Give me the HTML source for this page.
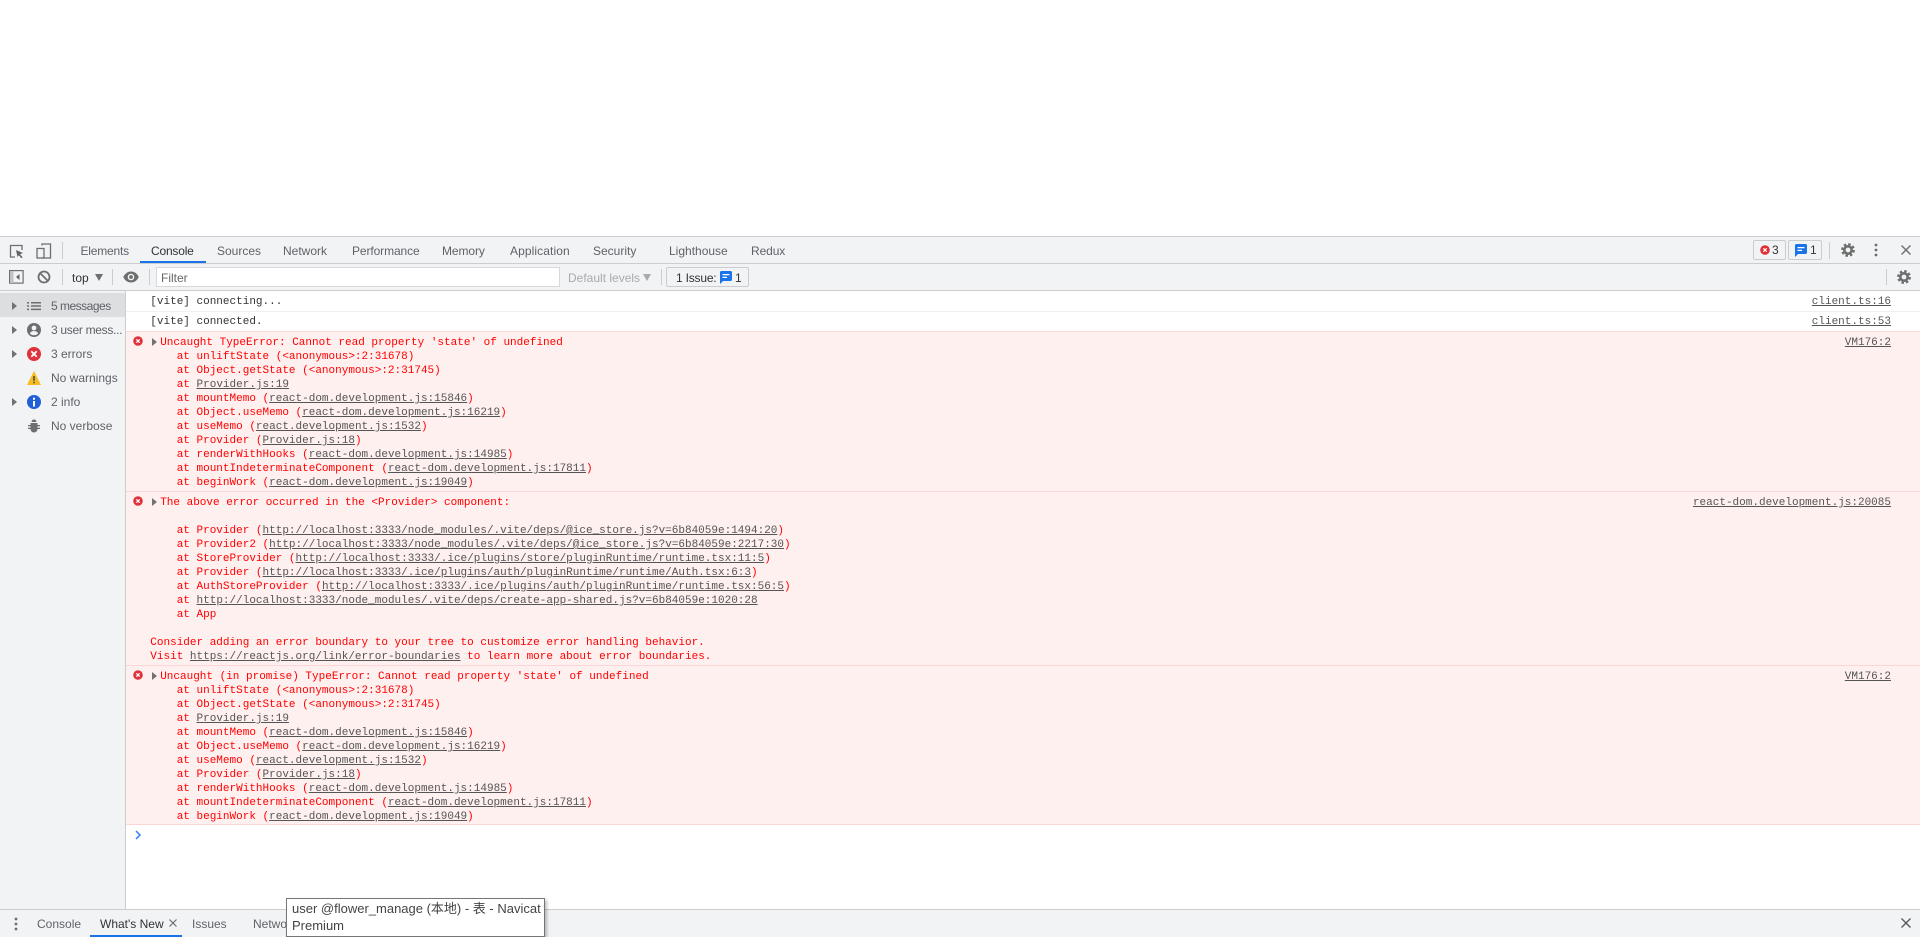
<!DOCTYPE html>
<html><head><meta charset="utf-8"><title>DevTools</title>
<style>
html,body{margin:0;padding:0;width:1920px;height:937px;overflow:hidden;background:#fff}
body{position:relative;font:12px "Liberation Sans","Noto Sans CJK SC",sans-serif;color:#5f6368}
.a{position:absolute;white-space:pre}
.bar{position:absolute;left:0;width:1920px;background:#f1f3f4;box-sizing:border-box}
.t{position:absolute;line-height:14px;white-space:pre}
.sep{position:absolute;width:1px;background:#ccc}
.m{position:absolute;font:11px/14px "Liberation Mono",monospace;white-space:pre;color:#f00}
.m a{color:#555;text-decoration:underline}
.m i{display:inline-block;width:9.9px}
.k{color:#333}
.er{position:absolute;left:126px;width:1794px;background:#fff0f0;border-top:1px solid #ffd6d6;box-sizing:border-box}
.src{position:absolute;right:29px;font:11px/14px "Liberation Mono",monospace;color:#555;text-decoration:underline;white-space:pre}
svg{position:absolute;overflow:visible}
.tri{position:absolute;width:0;height:0;border-left:5px solid #727272;border-top:4px solid transparent;border-bottom:4px solid transparent}
.badge{position:absolute;box-sizing:border-box;border:1px solid #c9ccd0;border-radius:2px;height:20px;color:#333}
</style></head><body>

<!-- Top tab bar -->
<div class="bar" style="top:236px;height:28px;border-top:1px solid #cbcdd1;border-bottom:1px solid #cbcdd1"></div>
<svg style="left:9px;top:244px" width="16" height="16" viewBox="0 0 16 16"><path d="M13 6V1.500H1.500V13H6" fill="none" stroke="#6e6e6e" stroke-width="1.300"/><path d="M7 6l7 3-3 1.200 2.600 3-1.200 1-2.600-3L8.500 13z" fill="#5f6368"/></svg>
<svg style="left:36px;top:243px" width="16" height="16" viewBox="0 0 16 16"><path d="M6 2.500V1h8.500v14H6" fill="none" stroke="#6e6e6e" stroke-width="1.300"/><rect x="1" y="5.500" width="7" height="9.500" fill="none" stroke="#6e6e6e" stroke-width="1.300"/></svg>
<div class="sep" style="left:62px;top:242px;height:17px"></div>
<div class="t" style="left:80.500px;top:244px;letter-spacing:-.2px">Elements</div>
<div class="t" style="left:151px;top:244px;color:#333;letter-spacing:-.2px">Console</div>
<div class="a" style="left:140px;top:261px;width:66px;height:2px;background:#1a73e8"></div>
<div class="t" style="left:217px;top:244px">Sources</div>
<div class="t" style="left:283px;top:244px">Network</div>
<div class="t" style="left:352px;top:244px;letter-spacing:-.1px">Performance</div>
<div class="t" style="left:442px;top:244px;letter-spacing:-.1px">Memory</div>
<div class="t" style="left:510px;top:244px;letter-spacing:.1px">Application</div>
<div class="t" style="left:593px;top:244px">Security</div>
<div class="t" style="left:669px;top:244px">Lighthouse</div>
<div class="t" style="left:751px;top:244px;letter-spacing:-.1px">Redux</div>

<div class="badge" style="left:1753px;top:240px;width:33px"></div>
<svg style="left:1760px;top:245px" width="10" height="10" viewBox="0 0 10 10"><circle cx="5" cy="5" r="4.800" fill="#e02f36"/><path d="M3.300 3.300l3.400 3.400M6.700 3.300L3.300 6.700" stroke="#fff" stroke-width="1.200"/></svg>
<div class="t" style="left:1772px;top:243px;color:#333">3</div>
<div class="badge" style="left:1788px;top:240px;width:34px"></div>
<svg style="left:1795px;top:244px" width="12" height="13" viewBox="0 0 12 13"><path d="M1.500 0h9A1.500 1.500 0 0 1 12 1.500v7A1.500 1.500 0 0 1 10.500 10H3l-3 3V1.500A1.500 1.500 0 0 1 1.500 0z" fill="#1a73e8"/><path d="M2.500 3h7v1.200h-7zM2.500 5.800h4.500V7H2.500z" fill="#fff"/></svg>
<div class="t" style="left:1810px;top:243px;color:#333">1</div>
<div class="sep" style="left:1829px;top:242px;height:17px"></div>
<svg style="left:1841px;top:243px" width="14" height="14" viewBox="-7 -7 14 14"><circle r="3.700" fill="none" stroke="#6e6e6e" stroke-width="2.600"/><circle r="5.800" fill="none" stroke="#6e6e6e" stroke-width="2.200" stroke-dasharray="2.550 2"/></svg>
<svg style="left:1874px;top:243px" width="4" height="14" viewBox="0 0 4 14"><circle cx="2" cy="2" r="1.400" fill="#6e6e6e"/><circle cx="2" cy="7" r="1.400" fill="#6e6e6e"/><circle cx="2" cy="12" r="1.400" fill="#6e6e6e"/></svg>
<svg style="left:1901px;top:245px" width="10" height="10" viewBox="0 0 10 10"><path d="M.5.500l9 9M9.500.500l-9 9" stroke="#6e6e6e" stroke-width="1.400"/></svg>

<!-- Console toolbar -->
<div class="bar" style="top:264px;height:27px;border-bottom:1px solid #cbcdd1"></div>
<svg style="left:9px;top:270px" width="15" height="14" viewBox="0 0 15 14"><rect x=".6" y=".6" width="13.500" height="12.500" fill="none" stroke="#6e6e6e" stroke-width="1.200"/><rect x="1" y="1" width="3.500" height="12" fill="#bfc2c6"/><path d="M10.500 4v6L7 7z" fill="#5f6368"/></svg>
<svg style="left:37px;top:270px" width="14" height="14" viewBox="0 0 14 14"><circle cx="7" cy="7" r="5.500" fill="none" stroke="#6e6e6e" stroke-width="1.800"/><path d="M3 3l8 8" stroke="#6e6e6e" stroke-width="1.800"/></svg>
<div class="sep" style="left:62px;top:269px;height:16px"></div>
<div class="t" style="left:72px;top:271px;color:#333">top</div>
<div class="a" style="left:95px;top:274px;border-top:7px solid #6e6e6e;border-left:4px solid transparent;border-right:4px solid transparent"></div>
<div class="sep" style="left:112px;top:269px;height:16px"></div>
<svg style="left:123px;top:271px" width="16" height="12" viewBox="0 0 16 12"><path d="M8 .5C4.500.5 1.600 2.800.3 6c1.300 3.200 4.200 5.500 7.700 5.500s6.400-2.300 7.700-5.500C14.400 2.800 11.500.5 8 .5z" fill="#6e6e6e"/><circle cx="8" cy="6" r="3.300" fill="#f1f3f4"/><circle cx="8" cy="6" r="1.900" fill="#6e6e6e"/></svg>
<div class="sep" style="left:149px;top:269px;height:16px"></div>
<div class="a" style="left:156px;top:267px;width:404px;height:20px;box-sizing:border-box;background:#fff;border:1px solid #d6d8db"></div>
<div class="t" style="left:161px;top:271px;color:#666">Filter</div>
<div class="t" style="left:568px;top:271px;color:#aaa">Default levels</div>
<div class="a" style="left:643px;top:274px;border-top:7px solid #aaa;border-left:4px solid transparent;border-right:4px solid transparent"></div>
<div class="sep" style="left:661px;top:269px;height:16px"></div>
<div class="badge" style="left:666px;top:267px;width:83px"></div>
<div class="t" style="left:676px;top:271px;color:#333;letter-spacing:-.2px">1 Issue:</div>
<svg style="left:720px;top:271px" width="12" height="13" viewBox="0 0 12 13"><path d="M1.500 0h9A1.500 1.500 0 0 1 12 1.500v7A1.500 1.500 0 0 1 10.500 10H3l-3 3V1.500A1.500 1.500 0 0 1 1.500 0z" fill="#1a73e8"/><path d="M2.500 3h7v1.200h-7zM2.500 5.800h4.500V7H2.500z" fill="#fff"/></svg>
<div class="t" style="left:735px;top:271px;color:#333">1</div>
<div class="sep" style="left:1886px;top:269px;height:16px"></div>
<svg style="left:1897px;top:270px" width="14" height="14" viewBox="-7 -7 14 14"><circle r="3.700" fill="none" stroke="#6e6e6e" stroke-width="2.600"/><circle r="5.800" fill="none" stroke="#6e6e6e" stroke-width="2.200" stroke-dasharray="2.550 2"/></svg>

<!-- Sidebar -->
<div class="a" style="left:0;top:291px;width:126px;height:618px;background:#f1f3f4;border-right:1px solid #cbcdd1;box-sizing:border-box"></div>
<div class="a" style="left:0;top:293px;width:125px;height:24px;background:#dcdee0"></div>
<div class="tri" style="left:12px;top:302px"></div>
<svg style="left:27px;top:301px" width="14" height="10" viewBox="0 0 14 10"><path d="M0 1h2v1.500H0zM4 1h10v1.500H4zM0 4.300h2v1.500H0zM4 4.300h10v1.500H4zM0 7.600h2v1.500H0zM4 7.600h10v1.500H4z" fill="#6e6e6e"/></svg>
<div class="t" style="left:51px;top:299px;letter-spacing:-.5px">5 messages</div>
<div class="tri" style="left:12px;top:326px"></div>
<svg style="left:27px;top:323px" width="14" height="14" viewBox="0 0 14 14"><circle cx="7" cy="7" r="7" fill="#6e6e6e"/><circle cx="7" cy="5" r="2.400" fill="#f1f3f4"/><path d="M2.800 10.500c.8-1.700 2.400-2.500 4.200-2.500s3.400.8 4.200 2.500C10.200 11.600 8.700 12.300 7 12.300s-3.200-.7-4.200-1.800z" fill="#f1f3f4"/></svg>
<div class="t" style="left:51px;top:323px;letter-spacing:-.3px">3 user mess...</div>
<div class="tri" style="left:12px;top:350px"></div>
<svg style="left:27px;top:347px" width="14" height="14" viewBox="0 0 14 14"><circle cx="7" cy="7" r="7" fill="#e0323a"/><path d="M4.300 4.300l5.400 5.400M9.700 4.300l-5.400 5.400" stroke="#fff" stroke-width="1.800"/></svg>
<div class="t" style="left:51px;top:347px">3 errors</div>
<svg style="left:27px;top:371px" width="14" height="14" viewBox="0 0 14 14"><path d="M7 0l7 14H0z" fill="#f5bd1f"/><path d="M6.200 5h1.600v4.800H6.200zM6.200 10.800h1.600v1.500H6.200z" fill="#4a4a4a"/></svg>
<div class="t" style="left:51px;top:371px">No warnings</div>
<div class="tri" style="left:12px;top:398px"></div>
<svg style="left:27px;top:395px" width="14" height="14" viewBox="0 0 14 14"><circle cx="7" cy="7" r="7" fill="#2060d8"/><path d="M6 6h2v5.500H6zM6 2.800h2v2H6z" fill="#fff"/></svg>
<div class="t" style="left:51px;top:395px">2 info</div>
<svg style="left:28px;top:419px" width="12" height="14" viewBox="0 0 12 14"><path d="M3.500 3a2.500 2.500 0 0 1 5 0zM2.500 4h7v2H12v1.300H9.500v1.400H12V10H9.500A3.500 3.500 0 0 1 6 13.500 3.500 3.500 0 0 1 2.500 10H0V8.700h2.500V7.300H0V6h2.500z" fill="#6e6e6e"/></svg>
<div class="t" style="left:51px;top:419px">No verbose</div>

<!-- Console messages -->
<div class="a" style="left:126px;top:291px;width:1794px;height:618px;background:#fff"></div>
<div class="a" style="left:126px;top:311px;width:1794px;height:1px;background:#f0f0f0"></div>
<div class="m k" style="left:150.300px;top:295px">[vite] connecting...</div>
<div class="src" style="top:295px">client.ts:16</div>
<div class="m k" style="left:150.300px;top:315px">[vite] connected.</div>
<div class="src" style="top:315px">client.ts:53</div>

<div class="er" style="top:331px;height:160px"></div>
<svg style="left:133px;top:336px" width="10" height="10" viewBox="0 0 10 10"><circle cx="5" cy="5" r="4.800" fill="#e0323a"/><path d="M3.300 3.300l3.400 3.400M6.700 3.300L3.300 6.700" stroke="#fff" stroke-width="1.200"/></svg>
<div class="tri" style="left:152px;top:338px"></div>
<div class="m" style="left:150.300px;top:336px"><i></i>Uncaught TypeError: Cannot read property 'state' of undefined
    at unliftState (&lt;anonymous&gt;:2:31678)
    at Object.getState (&lt;anonymous&gt;:2:31745)
    at <a>Provider.js:19</a>
    at mountMemo (<a>react-dom.development.js:15846</a>)
    at Object.useMemo (<a>react-dom.development.js:16219</a>)
    at useMemo (<a>react.development.js:1532</a>)
    at Provider (<a>Provider.js:18</a>)
    at renderWithHooks (<a>react-dom.development.js:14985</a>)
    at mountIndeterminateComponent (<a>react-dom.development.js:17811</a>)
    at beginWork (<a>react-dom.development.js:19049</a>)</div>
<div class="src" style="top:336px">VM176:2</div>

<div class="er" style="top:491px;height:174px"></div>
<svg style="left:133px;top:496px" width="10" height="10" viewBox="0 0 10 10"><circle cx="5" cy="5" r="4.800" fill="#e0323a"/><path d="M3.300 3.300l3.400 3.400M6.700 3.300L3.300 6.700" stroke="#fff" stroke-width="1.200"/></svg>
<div class="tri" style="left:152px;top:498px"></div>
<div class="m" style="left:150.300px;top:496px"><i></i>The above error occurred in the &lt;Provider&gt; component:

    at Provider (<a>http://localhost:3333/node_modules/.vite/deps/@ice_store.js?v=6b84059e:1494:20</a>)
    at Provider2 (<a>http://localhost:3333/node_modules/.vite/deps/@ice_store.js?v=6b84059e:2217:30</a>)
    at StoreProvider (<a>http://localhost:3333/.ice/plugins/store/pluginRuntime/runtime.tsx:11:5</a>)
    at Provider (<a>http://localhost:3333/.ice/plugins/auth/pluginRuntime/runtime/Auth.tsx:6:3</a>)
    at AuthStoreProvider (<a>http://localhost:3333/.ice/plugins/auth/pluginRuntime/runtime.tsx:56:5</a>)
    at <a>http://localhost:3333/node_modules/.vite/deps/create-app-shared.js?v=6b84059e:1020:28</a>
    at App

Consider adding an error boundary to your tree to customize error handling behavior.
Visit <a>https://reactjs.org/link/error-boundaries</a> to learn more about error boundaries.</div>
<div class="src" style="top:496px">react-dom.development.js:20085</div>

<div class="er" style="top:665px;height:160px;border-bottom:1px solid #ffd6d6"></div>
<svg style="left:133px;top:670px" width="10" height="10" viewBox="0 0 10 10"><circle cx="5" cy="5" r="4.800" fill="#e0323a"/><path d="M3.300 3.300l3.400 3.400M6.700 3.300L3.300 6.700" stroke="#fff" stroke-width="1.200"/></svg>
<div class="tri" style="left:152px;top:672px"></div>
<div class="m" style="left:150.300px;top:670px"><i></i>Uncaught (in promise) TypeError: Cannot read property 'state' of undefined
    at unliftState (&lt;anonymous&gt;:2:31678)
    at Object.getState (&lt;anonymous&gt;:2:31745)
    at <a>Provider.js:19</a>
    at mountMemo (<a>react-dom.development.js:15846</a>)
    at Object.useMemo (<a>react-dom.development.js:16219</a>)
    at useMemo (<a>react.development.js:1532</a>)
    at Provider (<a>Provider.js:18</a>)
    at renderWithHooks (<a>react-dom.development.js:14985</a>)
    at mountIndeterminateComponent (<a>react-dom.development.js:17811</a>)
    at beginWork (<a>react-dom.development.js:19049</a>)</div>
<div class="src" style="top:670px">VM176:2</div>

<svg style="left:135px;top:830px" width="6" height="10" viewBox="0 0 6 10"><path d="M1 1l4 4-4 4" fill="none" stroke="#367cf1" stroke-width="1.500"/></svg>

<!-- Drawer -->
<div class="bar" style="top:909px;height:28px;border-top:1px solid #cbcdd1"></div>
<svg style="left:14px;top:917px" width="4" height="14" viewBox="0 0 4 14"><circle cx="2" cy="2" r="1.400" fill="#6e6e6e"/><circle cx="2" cy="7" r="1.400" fill="#6e6e6e"/><circle cx="2" cy="12" r="1.400" fill="#6e6e6e"/></svg>
<div class="t" style="left:37px;top:917px">Console</div>
<div class="t" style="left:100px;top:917px;color:#333">What's New</div>
<svg style="left:169px;top:919px" width="8" height="8" viewBox="0 0 8 8"><path d="M.5.500l7 7M7.500.500l-7 7" stroke="#6e6e6e" stroke-width="1.200"/></svg>
<div class="a" style="left:90px;top:935px;width:92px;height:2px;background:#1a73e8"></div>
<div class="t" style="left:192px;top:917px">Issues</div>
<div class="t" style="left:253px;top:917px">Network</div>
<svg style="left:1901px;top:918px" width="10" height="10" viewBox="0 0 10 10"><path d="M.5.500l9 9M9.500.500l-9 9" stroke="#5a5a5a" stroke-width="1.400"/></svg>

<!-- Tooltip -->
<div class="a" style="left:286px;top:898px;width:259px;height:39px;box-sizing:border-box;background:#fff;border:1px solid #767676;box-shadow:2px 2px 3px rgba(0,0,0,.25)"></div>
<div class="a" style="left:292px;top:900px;font-size:13px;line-height:17px;color:#444">user @flower_manage (本地) - 表 - Navicat
Premium</div>
</body></html>
